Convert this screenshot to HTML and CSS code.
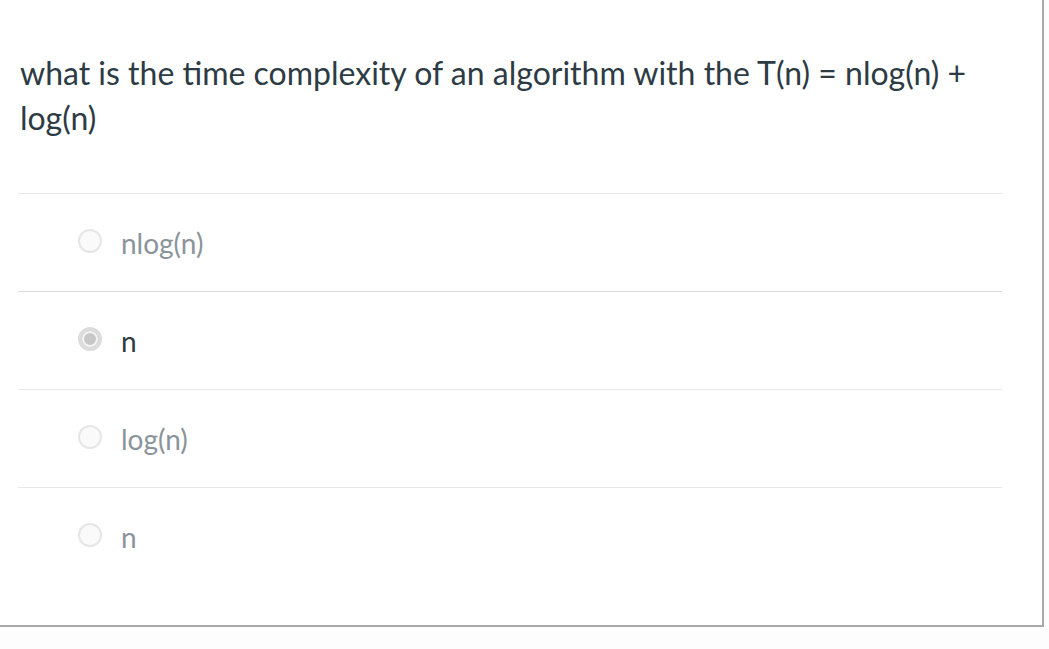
FILE: index.html
```html
<!DOCTYPE html>
<html>
<head>
<meta charset="utf-8">
<link rel="stylesheet" href="styles.css">
</head>
<body>
<div class="card">
  <div class="question">what is the time complexity of an algorithm with the T(n) = nlog(n) + log(n)</div>
  <div class="answers">
    <div class="answer"><span class="radio"></span><span class="label">nlog(n)</span></div>
    <div class="answer selected"><span class="radio"></span><span class="label">n</span></div>
    <div class="answer"><span class="radio"></span><span class="label">log(n)</span></div>
    <div class="answer"><span class="radio"></span><span class="label">n</span></div>
  </div>
</div>
</body>
</html>
```
FILE: styles.css
```css
html, body {
  margin: 0;
  padding: 0;
}
body {
  background: #fdfdfd;
  font-family: Lato, "Liberation Sans", sans-serif;
  width: 1049px;
  height: 649px;
  overflow: hidden;
}
.card {
  box-sizing: border-box;
  width: 1044px;
  height: 627px;
  background: #fff;
  border-right: 2px solid #a8a8a8;
  border-bottom: 2px solid #a8a8a8;
}
.question {
  padding: 50px 60px 0 20px;
  font-size: 32px;
  line-height: 45px;
  color: #2d3b45;
}
.answers {
  margin: 53px 40px 0 18px;
}
.answer {
  box-sizing: border-box;
  height: 98px;
  border-top: 1px solid #e8e8e8;
  display: flex;
  align-items: center;
  padding-left: 60px;
  padding-bottom: 4px;
}
.answer:nth-child(2) {
  border-top-color: #dcdcdc;
}
.radio {
  box-sizing: border-box;
  width: 24px;
  height: 24px;
  border-radius: 50%;
  border: 2px solid #e6e6e6;
  background: #fafafa;
  flex: none;
}
.selected .radio {
  border: 4px solid #dcdcdc;
  background: #c8c8c8;
  box-shadow: inset 0 0 0 2px #f4f4f4;
}
.label {
  margin-left: 19px;
  margin-top: 4px;
  font-size: 28px;
  color: #8b949b;
}
.selected .label {
  color: #2d3b45;
}
```
